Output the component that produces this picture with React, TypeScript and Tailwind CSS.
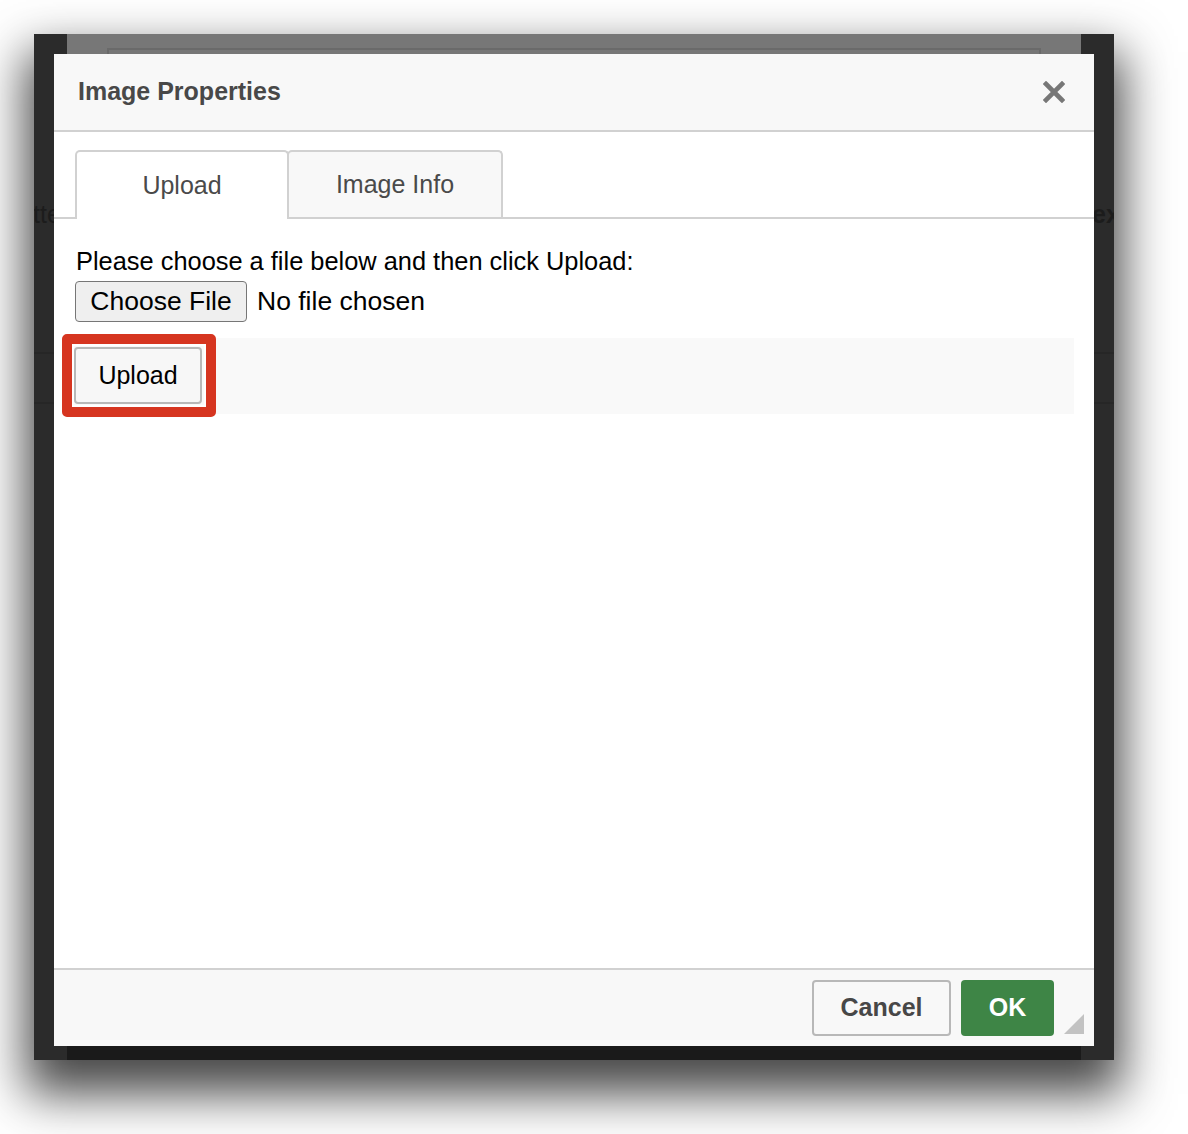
function CloseIcon() {
  return (
    <svg width="22" height="22" viewBox="0 0 22 22" aria-hidden="true">
      <path d="M3 3 L19 19 M19 3 L3 19" stroke="#777777" strokeWidth="4.6" strokeLinecap="square" fill="none" />
    </svg>
  );
}

function ResizeGrip() {
  return (
    <svg width="20" height="20" viewBox="0 0 20 20" aria-hidden="true">
      <polygon points="20,0 20,20 0,20" fill="#c2c2c2" />
    </svg>
  );
}

function Backdrop() {
  return (
    <>
      <div className="absolute left-[33px] right-[33px] top-0 h-[40px] bg-[#777777]">
        <div className="absolute left-[40px] top-[14px] w-[934px] h-[30px] border-2 border-b-0 border-[#6a6a6a]" />
      </div>
      <div className="absolute left-[33px] right-[33px] bottom-0 h-[14px] bg-[#1a1a1a]" />
      <div className="absolute left-0 right-0 top-[318px] h-[2px] bg-[#262626]" />
      <div className="absolute left-0 right-0 top-[368px] h-[2px] bg-[#262626]" />
      <span className="absolute left-[-1px] top-[165px] text-[25px] leading-[30px] text-[#1c1c1c]">tte</span>
      <span className="absolute left-[1058px] top-[165px] text-[25px] leading-[30px] font-bold text-[#1c1c1c]">ex</span>
    </>
  );
}

export default function App() {
  return (
    <div className="w-[1188px] min-h-[1134px] bg-white pt-[34px] pl-[34px] font-['Liberation_Sans',Arial,sans-serif]">
      <div className="relative w-[1080px] h-[1026px] overflow-hidden bg-[#2b2b2b] pt-[20px] pl-[20px] shadow-[0_26px_46px_8px_rgba(0,0,0,0.72)]">
        <Backdrop />

        <div className="relative z-10 w-[1040px] h-[992px] bg-white flex flex-col">
          {/* header */}
          <div className="h-[78px] shrink-0 flex items-center justify-between bg-[#f8f8f8] border-b-2 border-[#d1d1d1] pl-[24px] pr-[29px]">
            <h1 className="text-[25px] font-bold text-[#484848]">Image Properties</h1>
            <CloseIcon />
          </div>

          {/* body */}
          <div className="flex-1 flex flex-col">
            <div className="h-[87px] shrink-0 flex items-end pl-[21px] border-b-2 border-[#d1d1d1]">
              <div className="relative z-10 -mb-[2px] w-[214px] h-[69px] flex items-center justify-center bg-white border-2 border-b-0 border-[#d1d1d1] rounded-t-[5px] text-[25px] text-[#4a4a4a]">
                Upload
              </div>
              <div className="-ml-[2px] w-[216px] h-[67px] flex items-center justify-center bg-[#f8f8f8] border-2 border-b-0 border-[#d1d1d1] rounded-t-[5px] text-[25px] text-[#4a4a4a]">
                Image Info
              </div>
            </div>

            <div className="px-[22px]">
              <p className="mt-[27px] text-[25.4px] leading-[30px] text-black">
                Please choose a file below and then click Upload:
              </p>
              <div className="mt-[5px] h-[41px] flex items-center gap-[10px] -ml-[1px]">
                <button className="w-[172px] h-[41px] rounded-[4px] border-[1.5px] border-[#767676] bg-[#efefef] text-[26.5px] text-black">
                  Choose File
                </button>
                <span className="text-[26.5px] text-black">No file chosen</span>
              </div>

              <div className="relative mt-[16px] -ml-[2px] w-[1000px] h-[76px] bg-[#f9f9f9] pt-[9px]">
                <button className="w-[128px] h-[57px] rounded-[4px] border-2 border-[#b8b8b8] bg-[#f7f7f7] text-[25px] text-black">
                  Upload
                </button>
                <div className="absolute left-[-12px] top-[-4px] w-[154px] h-[83px] rounded-[5px] border-[10px] border-[#d63520] shadow-[inset_0_0_0_2px_#ffffff]" />
              </div>
            </div>
          </div>

          {/* footer */}
          <div className="relative h-[78px] shrink-0 flex justify-end items-start gap-[10px] pt-[10px] pr-[40px] bg-[#f8f8f8] border-t-2 border-[#d1d1d1]">
            <button className="w-[139px] h-[56px] rounded-[4px] border-2 border-[#b8b8b8] bg-[#f8f8f8] text-[25px] font-bold text-[#474747]">
              Cancel
            </button>
            <button className="w-[93px] h-[56px] rounded-[4px] bg-[#3e8546] text-[25px] font-bold text-white">
              OK
            </button>
            <div className="absolute right-[10px] bottom-[12px] flex">
              <ResizeGrip />
            </div>
          </div>
        </div>
      </div>
    </div>
  );
}
